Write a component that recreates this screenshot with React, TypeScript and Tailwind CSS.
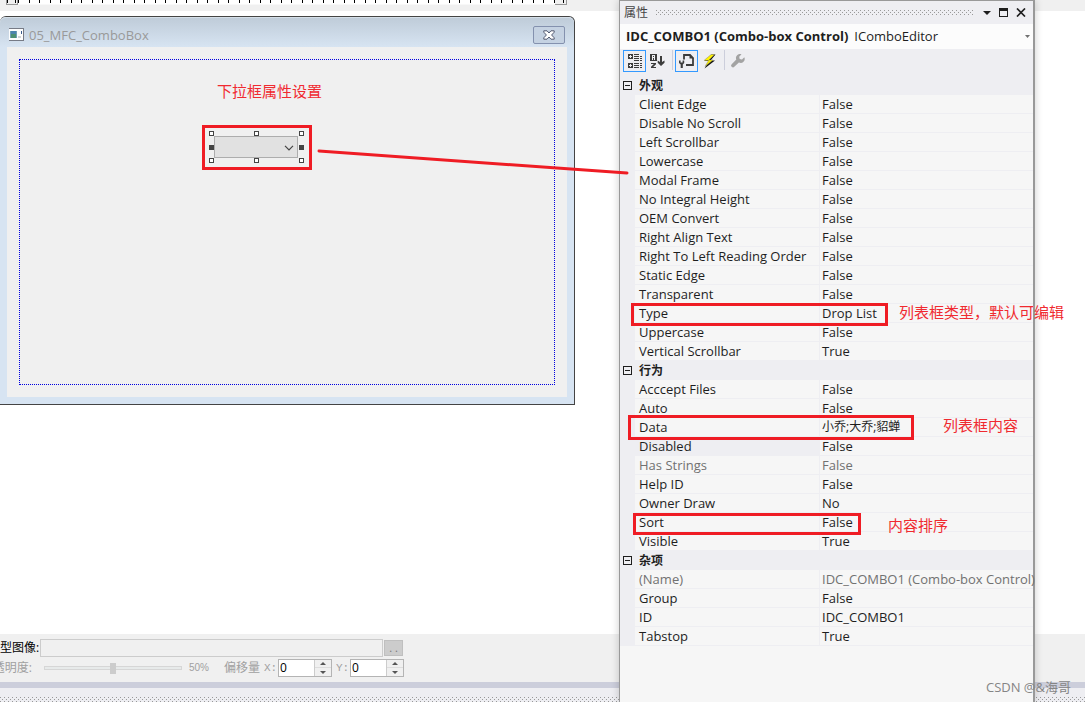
import React from "react";

type Row = { name: string; value: string; dim?: boolean; active?: boolean; cjk?: boolean };
type Group = { title: string; rows: Row[] };

const row = (name: string, value = "False"): Row => ({ name, value });

const groups: Group[] = [
  {
    title: "外观",
    rows: [
      row("Client Edge"),
      row("Disable No Scroll"),
      row("Left Scrollbar"),
      row("Lowercase"),
      row("Modal Frame"),
      row("No Integral Height"),
      row("OEM Convert"),
      row("Right Align Text"),
      row("Right To Left Reading Order"),
      row("Static Edge"),
      row("Transparent"),
      row("Type", "Drop List"),
      row("Uppercase"),
      row("Vertical Scrollbar", "True"),
    ],
  },
  {
    title: "行为",
    rows: [
      row("Acccept Files"),
      row("Auto"),
      { name: "Data", value: "小乔;大乔;貂蝉", cjk: true },
      { name: "Disabled", value: "False", active: true },
      { name: "Has Strings", value: "False", dim: true },
      row("Help ID"),
      row("Owner Draw", "No"),
      row("Sort"),
      row("Visible", "True"),
    ],
  },
  {
    title: "杂项",
    rows: [
      { name: "(Name)", value: "IDC_COMBO1 (Combo-box Control)", dim: true },
      row("Group"),
      row("ID", "IDC_COMBO1"),
      row("Tabstop", "True"),
    ],
  },
];

function Dots({ id, className }: { id: string; className: string }) {
  return (
    <svg className={className} aria-hidden="true" shapeRendering="crispEdges">
      <defs>
        <pattern id={id} width="4" height="4" patternUnits="userSpaceOnUse">
          <rect x="0" y="0" width="1" height="1" fill="#999999" />
          <rect x="2" y="2" width="1" height="1" fill="#999999" />
        </pattern>
      </defs>
      <rect width="100%" height="100%" fill={`url(#${id})`} />
    </svg>
  );
}

function Ruler() {
  return (
    <div className="flex h-[11px] shrink-0 items-start bg-[#f0f0f0] pl-1.5">
      <div className="flex h-[5px] w-3 justify-between border-r border-b border-l border-[#999] pr-px">
        <span className="h-[3px] w-px bg-black" />
        <span className="h-[3px] w-px bg-black" />
      </div>
      <div className="flex h-[5px] w-[537px] justify-between border-b border-[#f8f8f8] bg-white">
        {Array.from({ length: 52 }, (_, i) => (
          <span key={i} className="h-[3px] w-px bg-black" />
        ))}
      </div>
      <div className="flex h-[5px] w-3 justify-end border-r border-b border-[#999] pr-0.5">
        <span className="h-[3px] w-px bg-black" />
      </div>
    </div>
  );
}

const handles = [
  "left-0 top-0 border border-[#444] bg-white",
  "left-[45px] top-0 border border-[#444] bg-white",
  "left-[90px] top-0 border border-[#444] bg-white",
  "left-0 top-[14px] bg-[#444]",
  "left-[90px] top-[14px] bg-[#444]",
  "left-0 top-[27px] border border-[#444] bg-white",
  "left-[45px] top-[27px] border border-[#444] bg-white",
  "left-[90px] top-[27px] border border-[#444] bg-white",
];

function DialogPreview() {
  return (
    <section className="mt-[5px] flex h-[389px] w-[575px] flex-col rounded-t-md border-t border-r border-b border-[#444] bg-[#d7e4f2]">
      <header className="flex h-[30px] shrink-0 items-center justify-between rounded-t-md border-t border-[#d5dfe8] bg-linear-to-b from-[#bfccd9] to-[#d7e4f2] pr-[9px] pl-[9px]">
        <h1 className="flex items-center gap-[5px] pt-1 text-[13px] leading-4 text-[#999]">
          <svg width="15" height="13" viewBox="0 0 15 13" shapeRendering="crispEdges" aria-hidden="true">
            <rect width="15" height="13" fill="#777b86" />
            <rect width="14" height="11" y="1" fill="#fdfdfd" />
            <rect x="1" y="3" width="7" height="7" fill="#6f9fb4" />
            <rect x="2" y="3" width="5" height="4" fill="#4b83ad" />
            <rect x="2" y="6" width="5" height="4" fill="#4c8f72" />
            <rect x="12" y="3" width="1" height="3" fill="#3a5b8c" />
            <rect x="9" y="8" width="3" height="2" fill="#cfd3d8" />
          </svg>
          05_MFC_ComboBox
        </h1>
        <button
          aria-label="关闭"
          className="mt-1 flex h-[18px] w-8 items-center justify-center rounded-xs border border-[#8491ae] bg-[#c5d2e2]"
        >
          <svg width="12" height="10" viewBox="0 0 12 10" aria-hidden="true">
            <path
              d="M.8.8H4L6 3 8 .8h3.2v1.4L8.6 5l2.6 2.8v1.4H8L6 7 4 9.2H.8V7.8L3.4 5 .8 2.2Z"
              fill="#fff"
              stroke="#535970"
            />
          </svg>
        </button>
      </header>
      <div className="mr-[7px] mb-[7px] ml-[7px] flex-1 bg-[#f0f0f0] p-3">
        <div className="flex h-full flex-col border border-dotted border-[#0000e0] pl-[182px]">
          <p className="mt-[21px] pl-[15px] text-[15px] leading-5 text-[#f02a30]">下拉框属性设置</p>
          <div className="mt-6 h-[45px] w-[110px] border-[3px] border-[#ef1c24] px-[4px] py-[3px]">
            <div className="relative h-8 w-[95px] px-[5px] pt-[5px]">
              <select
                aria-label="Combo-box"
                className="block h-[22px] w-[84px] appearance-none border border-[#adadad] bg-[#e1e1e1]"
              />
              <svg
                className="pointer-events-none absolute top-[14px] right-[10px]"
                width="10"
                height="6"
                viewBox="0 0 10 6"
                aria-hidden="true"
              >
                <path d="M1 .8l4 4 4-4" fill="none" stroke="#444" strokeWidth="1.2" />
              </svg>
              {handles.map((h) => (
                <span key={h} className={`absolute size-[5px] ${h}`} />
              ))}
            </div>
          </div>
        </div>
      </div>
    </section>
  );
}

function Spinner({ label, id }: { label: string; id: string }) {
  return (
    <div className="flex items-center gap-[5px]">
      <label
        htmlFor={id}
        className="w-[9px] font-['Liberation_Mono','Noto_Sans_CJK_SC',monospace] text-[11px] whitespace-nowrap text-[#a0a0a0]"
      >
        {label}:
      </label>
      <div className="flex h-[18px] w-[54px] border border-[#b4b4b4] bg-white">
        <input id={id} defaultValue="0" className="w-[35px] pl-px text-[12px] leading-4 text-black outline-none" />
        <div className="flex w-[17px] flex-col border-l border-[#ccc] bg-[#f0f0f0]">
          <button aria-label={`${label} 增加`} className="flex h-2 items-center justify-center border-b border-[#ddd]">
            <svg width="6" height="3" viewBox="0 0 6 3" aria-hidden="true">
              <path d="M0 3h6L3 0z" fill="#555" />
            </svg>
          </button>
          <button aria-label={`${label} 减少`} className="flex h-2 items-center justify-center">
            <svg width="6" height="3" viewBox="0 0 6 3" aria-hidden="true">
              <path d="M0 0h6L3 3z" fill="#555" />
            </svg>
          </button>
        </div>
      </div>
    </div>
  );
}

function ImageBar() {
  return (
    <footer className="shrink-0">
      <div className="h-12 bg-[#f0f0f0] pt-[5px] text-[12px] leading-4">
        <div className="flex h-[18px] items-center">
          <label htmlFor="proto" className="w-10 whitespace-nowrap text-black">
            型图像:
          </label>
          <input id="proto" disabled className="h-[18px] w-[343px] border border-[#ccc] bg-[#f0f0f0]" />
          <button disabled className="ml-px h-4 w-[19px] border border-[#bfbfbf] bg-[#ccc] text-[11px] leading-3 text-[#777]">
            . .
          </button>
        </div>
        <div className="mt-0.5 flex h-[18px] items-center text-[#a0a0a0]">
          <label htmlFor="alpha" className="flex w-8 shrink-0 justify-end overflow-hidden whitespace-nowrap">
            透明度:
          </label>
          <input
            id="alpha"
            type="range"
            disabled
            defaultValue={50}
            className="ml-3 h-1 w-[138px] appearance-none border border-[#d6d6d6] bg-[#e7eaea] [&::-webkit-slider-thumb]:h-[11px] [&::-webkit-slider-thumb]:w-1.5 [&::-webkit-slider-thumb]:appearance-none [&::-webkit-slider-thumb]:bg-[#ccc]"
          />
          <span className="ml-[7px] w-[35px] font-['Liberation_Sans',sans-serif] text-[10px]">50%</span>
          <span className="w-10 whitespace-nowrap">偏移量</span>
          <div className="flex gap-1">
            <Spinner label="X" id="offset-x" />
            <Spinner label="Y" id="offset-y" />
          </div>
        </div>
      </div>
      <div className="h-1.5 bg-[#cccedb]" />
      <div className="h-3.5 bg-[#eeeef2] pt-[9px]">
        <Dots id="dock-dots" className="block h-[5px] w-full" />
      </div>
    </footer>
  );
}

function CategorizedIcon() {
  return (
    <svg width="14" height="14" viewBox="0 0 14 14" shapeRendering="crispEdges" aria-hidden="true">
      <path
        fill="#3c3c3c"
        fillRule="evenodd"
        d="M0 0h5v5H0zM2 1v1H1v1h1v1h1V3h1V2H3V1zM0 9h5v5H0zM2 10v1H1v1h1v1h1v-1h1v-1H3v-1zM6 0h5v1H6zM6 2h5v1H6zM6 4h5v1H6zM6 6h5v1H6zM6 9h5v1H6zM6 11h5v1H6zM6 13h5v1H6zM12 2h2v1h-2zM12 4h2v1h-2zM12 6h2v1h-2zM12 9h2v1h-2zM12 11h2v1h-2zM12 13h2v1h-2z"
      />
    </svg>
  );
}

function SortIcon() {
  return (
    <svg width="15" height="14" viewBox="0 0 15 14" aria-hidden="true">
      <path
        fill="#3c3c3c"
        fillRule="evenodd"
        d="M0 0h7v7H0zM2 1v5h1V4h1v2h1V1zM3 2h1v1H3zM1 9h5v1.2L3.2 13H6v1H1v-1.2L3.8 10H1zM10 2h2v6l2.5-1.6v2.3L11 12 7.7 8.700V6.400L10 8z"
      />
    </svg>
  );
}

function PageIcon() {
  return (
    <svg width="15" height="14" viewBox="0 0 15 14" aria-hidden="true">
      <path d="M5 5.500V1h6l3 3v7H7" fill="none" stroke="#3c3c3c" strokeWidth="1.800" />
      <path d="M10.500 0v4.500H15z" fill="#3c3c3c" />
      <path d="M0 6.500h1.600v2h2v-2H5.200v2.500L3.800 10.500V14H1.700v-3.500L0 9z" fill="#3c3c3c" />
    </svg>
  );
}

function BoltIcon() {
  return (
    <svg width="14" height="15" viewBox="0 0 14 15" aria-hidden="true">
      <path d="M8.500.5 1.500 7H6l-4.500 7.500L12 6.500H7.500L12.500.5z" fill="#111" />
      <path d="M8 .5 1 6.500h4.500L2 12.500 10 6H6L11.500.5z" fill="#fff200" stroke="#777" strokeWidth=".4" />
    </svg>
  );
}

function WrenchIcon() {
  return (
    <svg width="14" height="14" viewBox="0 0 14 14" aria-hidden="true">
      <path
        d="M10.500.3A4 4 0 0 0 5.300 5.600L.7 10.200a1.800 1.800 0 0 0 2.600 2.600L7.900 8.500A4 4 0 0 0 13.300 3.200L11 5.500 8.700 5 8.200 2.700z"
        fill="#a3a3a3"
      />
    </svg>
  );
}

const toolButton = "flex h-[22px] items-center justify-center";

function PropertiesPanel() {
  return (
    <aside className="relative mr-[50px] flex w-[416px] flex-col border-t border-r-2 border-l border-[#999] bg-[#f6f6f6] text-[#1e1e1e] shadow-[0_0_8px_rgba(0,0,0,0.2)]">
      <header className="flex h-[23px] shrink-0 items-center bg-[#eeeef2] pr-[7px] pl-1">
        <h2 className="text-[12px] leading-4 text-[#444]">属性</h2>
        <Dots id="title-dots" className="mr-2 ml-2 h-[5px] min-w-0 flex-1" />
        <button aria-label="窗口位置" className="flex w-[9px] justify-center">
          <svg width="8" height="4" viewBox="0 0 8 4" aria-hidden="true">
            <path d="M0 0h8L4 4z" fill="#1e1e1e" />
          </svg>
        </button>
        <button aria-label="最大化" className="ml-2">
          <svg width="9" height="9" viewBox="0 0 9 9" shapeRendering="crispEdges" aria-hidden="true">
            <path d="M0 0h9v9H0zM1 3v5h7V3z" fillRule="evenodd" fill="#1e1e1e" />
          </svg>
        </button>
        <button aria-label="关闭" className="ml-2">
          <svg width="10" height="9" viewBox="0 0 10 9" aria-hidden="true">
            <path d="M1 .5l8 8M9 .5l-8 8" stroke="#1e1e1e" strokeWidth="1.700" />
          </svg>
        </button>
      </header>
      <button className="flex h-[25px] shrink-0 items-center bg-[#fcfcfc] pr-[3px] pb-px pl-1.5 text-[13px] leading-4 whitespace-nowrap">
        <strong className="font-bold">IDC_COMBO1 (Combo-box Control)</strong>
        <span className="ml-1.5">IComboEditor</span>
        <svg className="ml-auto" width="5" height="3" viewBox="0 0 5 3" aria-hidden="true">
          <path d="M0 0h5L2.500 3z" fill="#717171" />
        </svg>
      </button>
      <div className="flex h-[27px] shrink-0 items-start bg-[#eeeef2] pt-px pl-[3px]">
        <button aria-label="按分类顺序" className={`${toolButton} w-[23px] border border-[#3399ff]`}>
          <CategorizedIcon />
        </button>
        <button aria-label="字母顺序" className={`${toolButton} w-[23px]`}>
          <SortIcon />
        </button>
        <span className="mr-0.5 ml-[3px] h-5 w-px bg-[#cccedb]" />
        <button aria-label="属性" className={`${toolButton} w-[23px] border border-[#3399ff]`}>
          <PageIcon />
        </button>
        <button aria-label="控件事件" className={`${toolButton} w-[23px]`}>
          <BoltIcon />
        </button>
        <span className="mr-0.5 ml-[3px] h-5 w-px bg-[#cccedb]" />
        <button disabled aria-label="属性页" className={`${toolButton} w-[22px]`}>
          <WrenchIcon />
        </button>
      </div>
      <table className="w-full table-fixed border-separate border-spacing-0 text-[13px] leading-[18px]">
        <colgroup>
          <col className="w-[15px]" />
          <col className="w-[185px]" />
          <col />
        </colgroup>
        {groups.map((g) => (
          <tbody key={g.title}>
            <tr className="h-[19px] bg-[#eeeef2]">
              <td className="p-0 pl-[3px]">
                <button
                  aria-label={`折叠 ${g.title}`}
                  className="flex size-[9px] items-center justify-center border border-[#1e1e1e]"
                >
                  <span className="h-px w-[5px] bg-[#1e1e1e]" />
                </button>
              </td>
              <th colSpan={2} className="p-0 pl-1 text-left text-[12px] font-bold">
                {g.title}
              </th>
            </tr>
            {g.rows.map((r) => (
              <tr key={r.name} className={`h-[19px] ${r.dim ? "text-[#717171]" : ""}`}>
                <td className="bg-[#eeeef2] p-0" />
                <td
                  className={`border-r border-b border-[#eeeef2] p-0 pl-1 whitespace-nowrap ${r.active ? "bg-[#eeeef2]" : ""}`}
                >
                  {r.name}
                </td>
                <td className={`border-b border-[#eeeef2] p-0 pl-0.5 whitespace-nowrap ${r.cjk ? "text-[12px]" : ""}`}>
                  {r.value}
                </td>
              </tr>
            ))}
          </tbody>
        ))}
      </table>

      <div className="pointer-events-none text-[15px] leading-5 whitespace-nowrap text-[#f02a30]">
        <span className="absolute top-[302px] left-[11px] h-[23px] w-[257px] border-[3px] border-[#ef1c24]" />
        <span className="absolute top-[301px] left-[279px]">列表框类型，默认可编辑</span>
        <span className="absolute top-[414px] left-[8px] h-[25px] w-[286px] border-[3px] border-[#ef1c24]" />
        <span className="absolute top-[414px] left-[323px]">列表框内容</span>
        <span className="absolute top-[512px] left-[13px] h-[22px] w-[228px] border-[3px] border-[#ef1c24]" />
        <span className="absolute top-[514px] left-[268px]">内容排序</span>
        <svg className="absolute top-[147px] -left-[304px]" width="316" height="30" viewBox="0 0 316 30" aria-hidden="true">
          <path d="M3 3 311 25" stroke="#ef1c24" strokeWidth="3" strokeLinecap="round" />
        </svg>
        <span className="absolute right-[-38px] bottom-[5px] text-[13px] text-[#858585]">CSDN @&amp;海哥</span>
      </div>
    </aside>
  );
}

export default function App() {
  return (
    <div className="grid min-h-screen overflow-hidden bg-white font-['Open_Sans','Noto_Sans_CJK_SC',sans-serif]">
      <main className="col-start-1 row-start-1 flex min-w-0 flex-col">
        <Ruler />
        <div className="flex-1 bg-white">
          <DialogPreview />
        </div>
        <ImageBar />
      </main>
      <div className="col-start-1 row-start-1 flex justify-self-end">
        <PropertiesPanel />
      </div>
    </div>
  );
}
